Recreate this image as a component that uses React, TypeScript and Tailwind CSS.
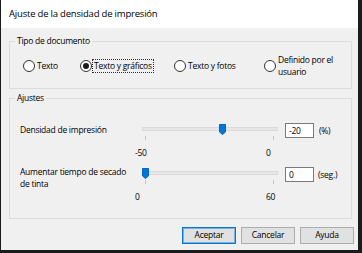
import React from 'react';

const font = { fontFamily: '"Open Sans", "Noto Sans", sans-serif' };

const Radio = ({ checked }: { checked?: boolean }) => (
  <span className="w-[12px] h-[12px] rounded-full border border-[#333] bg-white flex items-center justify-center shrink-0">
    {checked && <span className="w-[6px] h-[6px] rounded-full bg-[#1a1a1a]" />}
  </span>
);

const Thumb = () => (
  <svg width="7" height="11" viewBox="0 0 7 11">
    <path d="M0.5 0.5 H6.5 V8 L3.5 10.5 L0.5 8 Z" fill="#0078d7" stroke="#0067c0" strokeWidth="1" />
  </svg>
);

const Slider = ({ pos, min, max, minX, maxX }: { pos: number; min: string; max: string; minX: number; maxX: number }) => (
  <div className="relative w-[136px] h-[36px]">
    <div className="absolute left-0 right-0 top-[4px] h-[4px] bg-[#e7e7e7] border border-[#dadada]" />
    <div className="absolute top-[13px] left-[3px] w-px h-[4px] bg-[#c4c4c4]" />
    <div className="absolute top-[13px] left-[131px] w-px h-[4px] bg-[#c4c4c4]" />
    <div className="absolute top-[1px]" style={{ left: pos }}>
      <Thumb />
    </div>
    <span className="absolute top-[24px] leading-[12px]" style={{ left: minX }}>{min}</span>
    <span className="absolute top-[24px] leading-[12px]" style={{ left: maxX }}>{max}</span>
  </div>
);

const Button = ({ label, primary }: { label: string; primary?: boolean }) => (
  <button
    className={
      'w-[54px] h-[17px] flex items-center justify-center bg-[#e1e1e1] border leading-none ' +
      (primary ? 'border-[#0078d7] shadow-[inset_0_0_0_1px_rgba(0,120,215,0.45)]' : 'border-[#adadad]')
    }
  >
    {label}
  </button>
);

export default function App() {
  return (
    <div className="w-[362px] h-[253px] bg-[#1b1b1b] pl-px pr-[4px] pb-[3px] text-[8.5px] tracking-[-0.25px] text-black" style={font}>
      <div className="h-full flex flex-col bg-[#f0f0f0]">
        <div className="h-[28px] bg-white flex items-center pl-[8px] text-[9.5px] tracking-[-0.2px]">Ajuste de la densidad de impresión</div>

        <fieldset className="mt-[7px] ml-[8px] mr-[6px] border border-[#dcdcdc] pb-[10px]">
          <legend className="ml-[5px] px-[2px] leading-[12px]">Tipo de documento</legend>
          <div className="flex items-center h-[24px] mt-[7px] pl-[13px]">
            <div className="w-[57px] flex items-center gap-[2px]">
              <Radio />
              <span>Texto</span>
            </div>
            <div className="w-[94px] flex items-center gap-[1px]">
              <Radio checked />
              <span className="outline outline-1 outline-dotted outline-[#333] px-px leading-[12px]">Texto y gráficos</span>
            </div>
            <div className="w-[90px] flex items-center gap-[2px]">
              <Radio />
              <span>Texto y fotos</span>
            </div>
            <div className="flex items-center gap-[2px]">
              <Radio />
              <span className="leading-[12px]">Definido por el<br />usuario</span>
            </div>
          </div>
        </fieldset>

        <fieldset className="mt-[3px] ml-[8px] mr-[6px] border border-[#dcdcdc] h-[127px]">
          <legend className="ml-[5px] px-[2px] leading-[12px]">Ajustes</legend>
          <div className="flex items-start pl-[10px] mt-[19px]">
            <span className="w-[122px] mt-[1px] leading-[12px]">Densidad de impresión</span>
            <Slider pos={77} min="-50" max="0" minX={-7} maxX={124} />
            <div className="ml-[7px] w-[29px] h-[15px] bg-white border border-[#7a7a7a] px-[3px] leading-[13px]">-20</div>
            <span className="ml-[5px] leading-[15px]">(%)</span>
          </div>
          <div className="flex items-start pl-[10px] mt-[8px]">
            <span className="w-[122px] -mt-[1px] leading-[12px]">Aumentar tiempo de secado<br />de tinta</span>
            <Slider pos={0} min="0" max="60" minX={-7} maxX={124} />
            <div className="ml-[7px] w-[29px] h-[15px] bg-white border border-[#7a7a7a] px-[3px] leading-[13px]">0</div>
            <span className="ml-[4px] leading-[15px]">(seg.)</span>
          </div>
        </fieldset>

        <div className="flex justify-end gap-[5px] mt-[8px] mr-[4px]">
          <Button label="Aceptar" primary />
          <Button label="Cancelar" />
          <Button label="Ayuda" />
        </div>
      </div>
    </div>
  );
}
